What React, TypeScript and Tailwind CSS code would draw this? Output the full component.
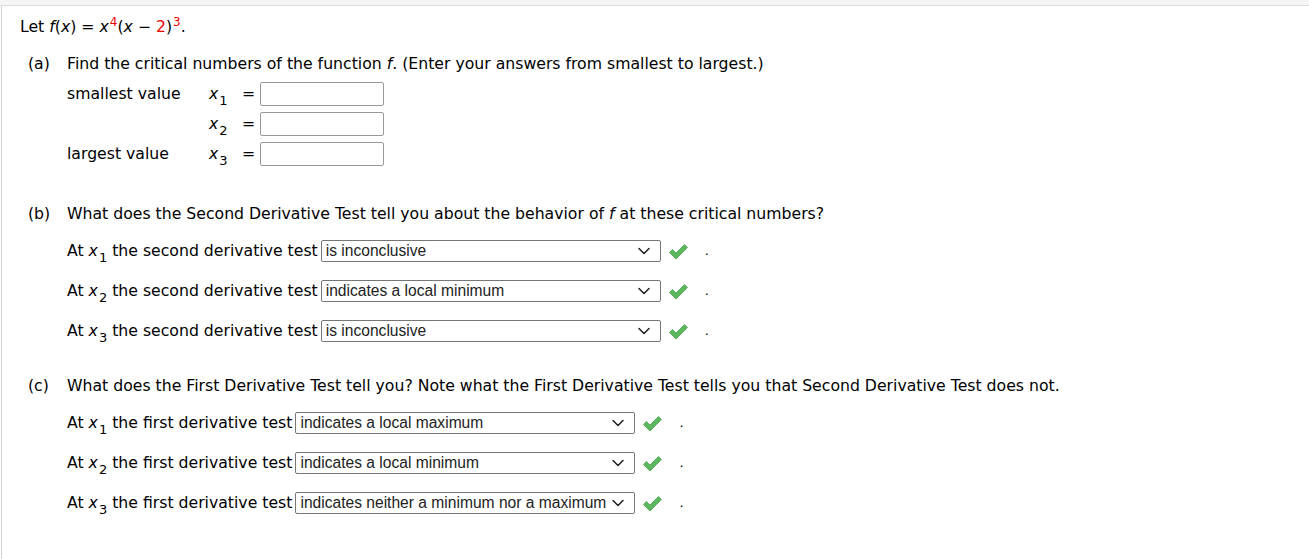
import { ChevronDown } from "lucide-react";

const body = "font-['DejaVu_Sans',Verdana,sans-serif] text-[15.7px] text-black";

function Check() {
  return (
    <svg width="21" height="17" viewBox="0 0 21 17" className="shrink-0">
      <path
        d="M1.5 9.5 L4.5 6.5 L8 10 L16.5 1.5 L19.5 4.5 L8 16 Z"
        fill="#5cb85c"
        stroke="#4a9d4a"
        strokeWidth="0.8"
        strokeLinejoin="round"
      />
    </svg>
  );
}

function Xsub({ n }: { n: number }) {
  return (
    <span className="inline-flex items-baseline">
      <i>x</i>
      <span className="relative top-[6px] text-[13px] ml-[1px]">{n}</span>
    </span>
  );
}

function Pick({ value }: { value: string }) {
  return (
    <div className="w-[340px] h-[22px] border border-[#767676] rounded-[2px] flex items-center justify-between pl-[4px] pr-[6px] font-['Liberation_Sans',Arial,sans-serif] text-[15.6px] text-[#222]">
      <span className="whitespace-nowrap">{value}</span>
      <ChevronDown size={20} strokeWidth={1.9} className="text-[#222] shrink-0" />
    </div>
  );
}

function TestRow({ n, test, value }: { n: number; test: string; value: string }) {
  return (
    <div className="flex items-center h-[22px]">
      <span className="whitespace-nowrap">
        At <Xsub n={n} /> the {test} test
      </span>
      <span className="ml-[3px]">
        <Pick value={value} />
      </span>
      <span className="ml-[7px]">
        <Check />
      </span>
      <span className="ml-[16px] text-[13px]">.</span>
    </div>
  );
}

function InputRow({ label, n }: { label: string; n: number }) {
  return (
    <div className="flex items-center h-[24px]">
      <span className="w-[142px] whitespace-nowrap">{label}</span>
      <span className="w-[33px]">
        <Xsub n={n} />
      </span>
      <span className="w-[18px]">=</span>
      <div className="w-[124px] h-[24px] border border-[#999] rounded-[2px] bg-white" />
    </div>
  );
}

function Part({ tag, children }: { tag: string; children: React.ReactNode }) {
  return (
    <div className="flex h-[20px] items-center ml-[8px]">
      <span className="w-[39px]">{tag}</span>
      <span className="whitespace-nowrap">{children}</span>
    </div>
  );
}

export default function App() {
  return (
    <div className={`${body} w-[1309px] h-[559px] bg-white overflow-hidden`}>
      <div className="h-[6px] bg-[#f5f5f5] border-b border-[#dedede]" />
      <div className="ml-[1px] border-l border-[#d4d4d4] h-[553px] pl-[18px] pt-[11px]">
        <div className="h-[20px] leading-[20px] whitespace-nowrap">
          Let <i>f</i>(<i>x</i>) = <i>x</i>
          <sup className="text-[12px] text-[#e00] ml-[1px]">4</sup>(<i>x</i> − <span className="text-[#e00]">2</span>)
          <sup className="text-[12px] text-[#e00] ml-[1px]">3</sup>.
        </div>

        <div className="mt-[17px]">
          <Part tag="(a)">
            Find the critical numbers of the function <i>f</i>. (Enter your answers from smallest to largest.)
          </Part>
          <div className="ml-[47px] mt-[8px] flex flex-col gap-[6px]">
            <InputRow label="smallest value" n={1} />
            <InputRow label="" n={2} />
            <InputRow label="largest value" n={3} />
          </div>
        </div>

        <div className="mt-[38px]">
          <Part tag="(b)">
            What does the Second Derivative Test tell you about the behavior of <i>f</i> at these critical numbers?
          </Part>
          <div className="ml-[47px] mt-[16px] flex flex-col gap-[18px]">
            <TestRow n={1} test="second derivative" value="is inconclusive" />
            <TestRow n={2} test="second derivative" value="indicates a local minimum" />
            <TestRow n={3} test="second derivative" value="is inconclusive" />
          </div>
        </div>

        <div className="mt-[34px]">
          <Part tag="(c)">
            What does the First Derivative Test tell you? Note what the First Derivative Test tells you that Second Derivative Test does not.
          </Part>
          <div className="ml-[47px] mt-[16px] flex flex-col gap-[18px]">
            <TestRow n={1} test="first derivative" value="indicates a local maximum" />
            <TestRow n={2} test="first derivative" value="indicates a local minimum" />
            <TestRow n={3} test="first derivative" value="indicates neither a minimum nor a maximum" />
          </div>
        </div>
      </div>
    </div>
  );
}
